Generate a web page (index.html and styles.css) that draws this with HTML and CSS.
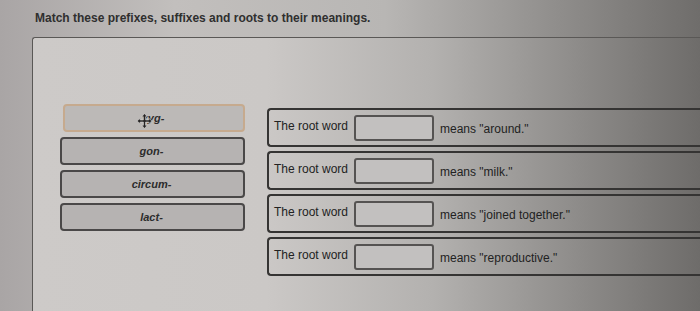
FILE: index.html
```html
<!DOCTYPE html>
<html>
<head>
<meta charset="utf-8">
<link rel="stylesheet" href="styles.css">
</head>
<body>
<div class="page">
  <h1 class="title">Match these prefixes, suffixes and roots to their meanings.</h1>
  <div class="panel">
    <div class="tiles">
      <div class="tile tile-active"><span>xyg-</span>
        <svg class="cursor" width="15" height="16" viewBox="0 0 14 14"><path d="M7 0 L9.5 3 H8 V6 H11 V4.5 L14 7 L11 9.5 V8 H8 V11 H9.5 L7 14 L4.5 11 H6 V8 H3 V9.5 L0 7 L3 4.5 V6 H6 V3 H4.5 Z" fill="#262424" stroke="#d8d6d4" stroke-width="0.6"/></svg>
      </div>
      <div class="tile">gon-</div>
      <div class="tile">circum-</div>
      <div class="tile">lact-</div>
    </div>
    <div class="rows">
      <div class="row"><span class="lead">The root word</span><span class="box"></span><span class="meaning">means "around."</span></div>
      <div class="row"><span class="lead">The root word</span><span class="box"></span><span class="meaning">means "milk."</span></div>
      <div class="row"><span class="lead">The root word</span><span class="box"></span><span class="meaning">means "joined together."</span></div>
      <div class="row"><span class="lead">The root word</span><span class="box"></span><span class="meaning">means "reproductive."</span></div>
    </div>
  </div>
</div>
</body>
</html>
```

FILE: styles.css
```css
html, body {
  margin: 0;
  padding: 0;
  width: 700px;
  height: 311px;
  overflow: hidden;
}
body {
  background: linear-gradient(to right, #a9a5a5 0%, #c2bfbd 25%, #b8b6b4 55%, #8f8d8b 80%, #6f6d6b 100%);
  font-family: "Liberation Sans", Arial, sans-serif;
  color: #2a2a2a;
}
.page {
  padding-top: 11px;
}
.title {
  margin: 0 0 0 35px;
  font-size: 12px;
  line-height: 15px;
  font-weight: bold;
  color: #2f2f2f;
}
.panel {
  margin-top: 11px;
  margin-left: 32px;
  height: 274px;
  border-top: 1px solid #5a5856;
  border-left: 1px solid #5a5856;
  border-top-left-radius: 3px;
  background: linear-gradient(to right, #cdcac8 0%, #cbc8c6 35%, #b3b1af 60%, #8d8b89 82%, #6e6c6a 100%);
  display: flex;
  gap: 22px;
  padding-top: 66px;
  box-sizing: border-box;
}
.tiles {
  margin-left: 27px;
  width: 185px;
  display: flex;
  flex-direction: column;
  gap: 5px;
}
.tile {
  position: relative;
  height: 28px;
  box-sizing: border-box;
  border: 2px solid #4a4848;
  border-radius: 4px;
  background: #b6b3b2;
  display: flex;
  align-items: center;
  justify-content: center;
  font-size: 11px;
  font-weight: bold;
  font-style: italic;
  color: #2c2c2c;
  padding-right: 2px;
}
.tile-active {
  border: 2px solid #c6aa8e;
  background: #bcb9b7;
  margin-left: 3px;
}
.cursor {
  position: absolute;
  left: 72px;
  top: 7px;
}
.rows {
  margin-top: 4px;
  flex: 1;
  display: flex;
  flex-direction: column;
  gap: 4px;
}
.row {
  height: 39px;
  box-sizing: border-box;
  border: 2px solid #353433;
  border-right: none;
  border-radius: 4px 0 0 4px;
  display: flex;
  align-items: center;
  padding-left: 5px;
  font-size: 12px;
  color: #222;
}
.lead {
  width: 80px;
  margin-top: -4px;
}
.box {
  width: 80px;
  height: 26px;
  box-sizing: border-box;
  border: 2px solid #555352;
  border-radius: 3px;
  background: #c2c0bf;
}
.meaning {
  margin-left: 6px;
  margin-top: 2px;
}
```
